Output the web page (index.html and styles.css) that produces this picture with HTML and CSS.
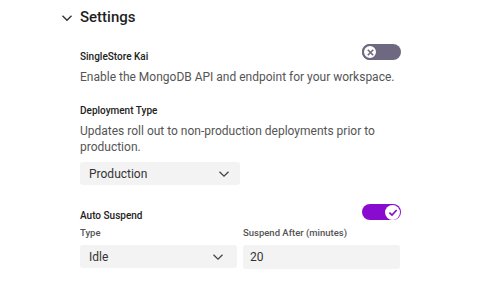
FILE: index.html
```html
<!DOCTYPE html>
<html>
<head>
<meta charset="utf-8">
<link rel="stylesheet" href="styles.css">
</head>
<body>
<div class="panel">
  <div class="header">
    <svg class="head-chev" width="12" height="8" viewBox="0 0 12 8"><path d="M1.5 1.8 L6 6.2 L10.5 1.8" fill="none" stroke="#333" stroke-width="1.4"/></svg>
    <span class="title">Settings</span>
  </div>

  <div class="row first">
    <span class="label lbl-toggle">SingleStore Kai</span>
    <span class="toggle off">
      <span class="knob">
        <svg width="9" height="9" viewBox="0 0 9 9"><path d="M1.8 1.8 L7.2 7.2 M7.2 1.8 L1.8 7.2" stroke="#6e6880" stroke-width="1.6" fill="none"/></svg>
      </span>
    </span>
  </div>
  <p class="desc d1">Enable the MongoDB API and endpoint for your workspace.</p>

  <div class="label sect">Deployment Type</div>
  <p class="desc d2">Updates roll out to non-production deployments prior to production.</p>
  <div class="select prod">
    <span>Production</span>
    <svg width="12" height="8" viewBox="0 0 12 8"><path d="M1.5 1.8 L6 6.2 L10.5 1.8" fill="none" stroke="#444" stroke-width="1.3"/></svg>
  </div>

  <div class="row second">
    <span class="label lbl-toggle2">Auto Suspend</span>
    <span class="toggle on">
      <span class="knob">
        <svg width="10" height="9" viewBox="0 0 10 9"><path d="M1.4 4.6 L4 7 L8.7 2" stroke="#8a0bd0" stroke-width="1.7" fill="none"/></svg>
      </span>
    </span>
  </div>
  <div class="grid">
    <div class="field">
      <div class="sublabel">Type</div>
      <div class="select">
        <span>Idle</span>
        <svg width="12" height="8" viewBox="0 0 12 8"><path d="M1.5 1.8 L6 6.2 L10.5 1.8" fill="none" stroke="#444" stroke-width="1.3"/></svg>
      </div>
    </div>
    <div class="field">
      <div class="sublabel">Suspend After (minutes)</div>
      <div class="input">20</div>
    </div>
  </div>
</div>
</body>
</html>
```

FILE: styles.css
```css
html, body {
  margin: 0;
  padding: 0;
  background: #ffffff;
}
body {
  font-family: Roboto, "Liberation Sans", sans-serif;
  color: #333;
}
.panel {
  width: 320px;
  margin-left: 80px;
  padding-top: 7px;
}
.header {
  display: flex;
  align-items: center;
  height: 20px;
  margin-left: -19px;
}
.head-chev {
  margin-right: 7px;
  margin-top: 2px;
}
.title {
  font-size: 15px;
  font-weight: 500;
  color: #1f1f1f;
  line-height: 20px;
}
.row {
  display: flex;
  justify-content: space-between;
  align-items: flex-start;
}
.row.first {
  margin-top: 17px;
}
.row.second {
  margin-top: 19px;
}
.label {
  font-size: 10px;
  font-weight: 500;
  line-height: 14px;
  color: #222;
}
.lbl-toggle {
  margin-top: 6px;
}
.lbl-toggle2 {
  margin-top: 5px;
}
.sect {
  margin-top: 19px;
}
.desc {
  margin: 0;
  font-size: 12px;
  line-height: 16px;
  color: #555;
}
.d1 { margin-top: 5px; }
.d2 { margin-top: 5px; }
.toggle {
  position: relative;
  width: 39px;
  height: 16px;
  border-radius: 8px;
  display: block;
  margin-right: -1px;
}
.toggle.off {
  background: #6e6880;
}
.toggle.on {
  background: #8a0bd0;
}
.knob {
  position: absolute;
  border-radius: 50%;
  background: #fff;
  display: flex;
  align-items: center;
  justify-content: center;
}
.toggle.off .knob {
  left: 0;
  top: 0;
  width: 12px;
  height: 12px;
  border: 2px solid #6e6880;
}
.toggle.on .knob {
  right: 1px;
  top: 0.5px;
  width: 15px;
  height: 15px;
}
.select, .input {
  box-sizing: border-box;
  background: #f3f3f3;
  border-radius: 3px;
  font-size: 12px;
  color: #333;
  display: flex;
  align-items: center;
}
.select {
  justify-content: space-between;
  padding: 0 9px 0 9px;
  height: 23px;
}
.select svg {
  margin-right: 1px;
}
.prod {
  width: 160px;
  margin-top: 7px;
}
.grid {
  display: grid;
  grid-template-columns: 157px 157px;
  column-gap: 6px;
  margin-top: 3px;
}
.sublabel {
  font-size: 9.5px;
  font-weight: 500;
  line-height: 14px;
  color: #555;
  margin-bottom: 5px;
}
.grid .select {
  height: 23px;
  padding-right: 12px;
}
.input {
  height: 24px;
  padding-left: 7px;
}
```
